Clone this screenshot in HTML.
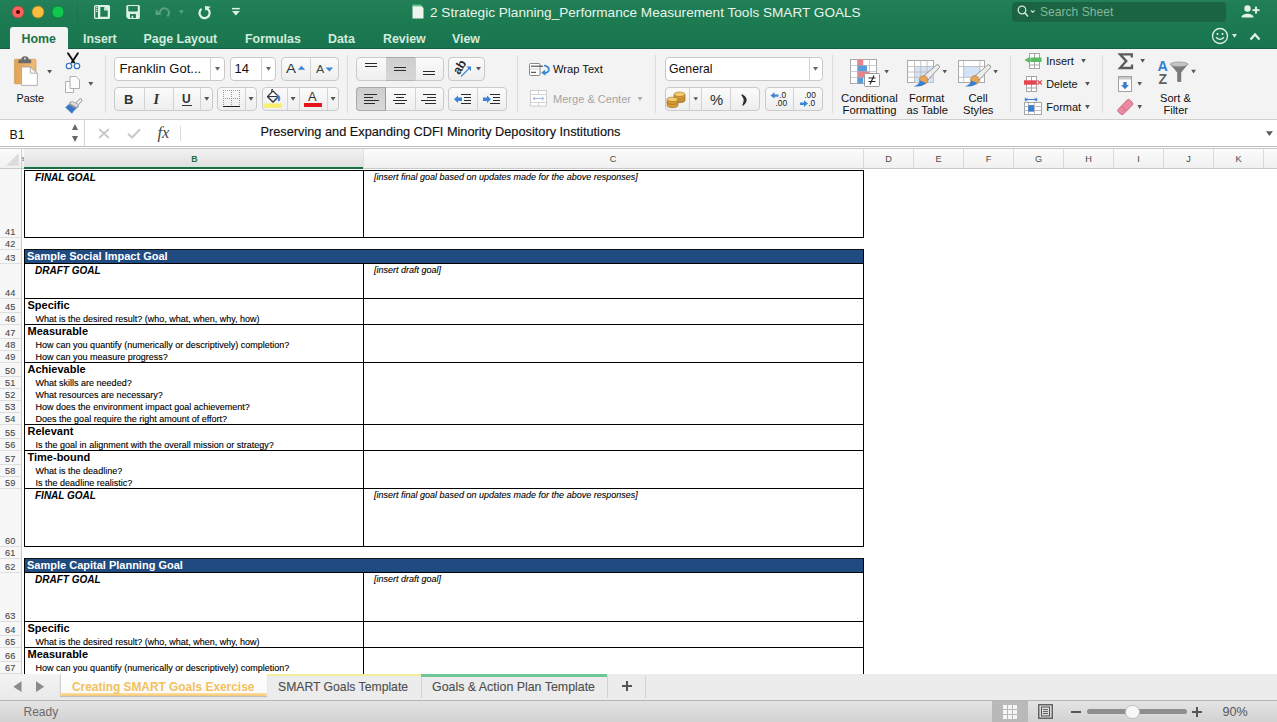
<!DOCTYPE html>
<html><head><meta charset="utf-8">
<style>
*{margin:0;padding:0;box-sizing:border-box}
html,body{width:1277px;height:722px;overflow:hidden;background:#fff;font-family:"Liberation Sans",sans-serif;position:relative}
.a,.rn,.ch,.hd,.sb,.fg,.ins,.blue,.hl,.vl,.t{position:absolute}
.t{white-space:nowrap;line-height:1}
#title{left:0;top:0;width:1277px;height:49px;background:linear-gradient(#22805a,#1e7c52 30%,#187550);border-bottom:1px solid #17603f}
#hometab{left:10px;top:27px;width:58px;height:23px;background:#f4f4f4;border-radius:3px 3px 0 0}
.rtab{top:33px;font-size:12.4px;font-weight:bold;color:#d3ebdc}
#ribbon{left:0;top:49px;width:1277px;height:71px;background:#f3f3f3;border-bottom:1px solid #cfcfcf}
.sep{top:55px;width:1px;height:58px;background:#dcdcdc}
.btn{border:1px solid #cacaca;border-radius:4px;background:linear-gradient(#fbfbfb,#eeeeee)}
.box{border:1px solid #c9c9c9;border-radius:4px;background:#fff}
.dv{width:1px;background:#d3d3d3}
.arr{width:5px;height:3.8px;background:#555;clip-path:polygon(0 0,100% 0,50% 100%)}
.rl{font-size:11px;color:#111}
#fbar{left:0;top:120px;width:1277px;height:27px;background:#fff;border-bottom:1px solid #bdbdbd}
#fbar2{left:0;top:148px;width:1277px;height:1px;background:#c8c8c8}
#colhdr{left:0;top:149px;width:1277px;height:20px;background:linear-gradient(#fbfbfb,#f0f0f0);border-bottom:1px solid #c9c9c9}
#rowhdr{left:0;top:169px;width:22px;height:505px;background:#f7f7f7;border-right:1px solid #c9c9c9}
.rn{left:-0.3px;width:21px;font-size:9.2px;color:#474747;-webkit-text-stroke:0.1px #474747;display:flex;align-items:flex-end;justify-content:center;border-bottom:1px solid #dedede;line-height:9px;padding-bottom:0px}
.rn span{display:inline-block}
.ch{top:149px;height:19px;font-size:9.2px;color:#4a4a4a;text-align:center;line-height:20px;border-left:1px solid #dadada}
.hd{left:27.5px;font-size:11px;font-weight:bold;color:#000;line-height:14px;white-space:nowrap}
.sb{left:35.6px;font-size:9px;color:#000;-webkit-text-stroke:0.12px #000;line-height:12px;white-space:nowrap}
.fg{left:35px;font-size:10px;font-weight:bold;font-style:italic;color:#000;line-height:15px;white-space:nowrap}
.ins{left:374px;font-size:9px;font-style:italic;color:#000;-webkit-text-stroke:0.1px #000;line-height:15px;white-space:nowrap}
.blue{left:24px;width:840px;background:#1f4b80;border-top:1px solid #111;border-bottom:1px solid #111}
.blue span{position:absolute;left:3px;top:0;font-size:11px;font-weight:bold;color:#fff;line-height:13px;white-space:nowrap}
.hl{left:24px;width:840px;height:1px;background:#000}
.vl{width:1px;background:#000}
#tabbar{left:0;top:674px;width:1277px;height:27px;background:#ececec;border-bottom:1px solid #b5b5b5}
#status{left:0;top:701px;width:1277px;height:21px;background:linear-gradient(#e4e4e4,#d2d2d2)}
</style></head><body>
<div id="title" class="a"></div>
<!-- traffic lights -->
<svg class="a" style="left:0;top:0" width="72" height="24" viewBox="0 0 72 24">
 <circle cx="18" cy="12" r="6" fill="#fc615d" stroke="#b53c3a" stroke-opacity="0.7" stroke-width="0.9"/>
 <circle cx="18" cy="11.9" r="2" fill="#4f0002"/>
 <circle cx="38" cy="12" r="6" fill="#fdbc40" stroke="#a77a1c" stroke-opacity="0.7" stroke-width="0.9"/>
 <circle cx="58" cy="12" r="6" fill="#10c84f" stroke="#0b7a30" stroke-opacity="0.8" stroke-width="0.9"/>
</svg>
<div class="a" style="left:77px;top:3px;width:1px;height:20px;background:rgba(0,0,0,0.07)"></div>
<!-- quick access icons -->
<svg class="a" style="left:88px;top:0px" width="160" height="24" viewBox="88 0 160 24">
 <path fill-rule="evenodd" fill="#dcf2e4" d="M95.5 4.9 H108.5 Q110 4.9 110 6.4 V17.5 Q110 19 108.5 19 H95.5 Q94 19 94 17.5 V6.4 Q94 4.9 95.5 4.9z M95.3 6.3 V17.8 H97.9 V6.3z M100.3 7 V16.7 H107.7 V10.5 L104.2 7z"/>
 <circle cx="96.6" cy="7.6" r="0.75" fill="#dcf2e4"/><circle cx="96.6" cy="9.5" r="0.75" fill="#dcf2e4"/><circle cx="96.6" cy="11.4" r="0.75" fill="#dcf2e4"/>
 <path d="M104.2 7 V10.5 H107.7z" fill="#dcf2e4"/>
 <path fill-rule="evenodd" fill="#dcf2e4" d="M127.8 4.9 H138.4 Q139.9 4.9 139.9 6.4 V17.5 Q139.9 19 138.4 19 H128.3 L126.3 17 V6.4 Q126.3 4.9 127.8 4.9z M128.2 6.1 V10.5 Q128.2 11.5 129.2 11.5 H136.8 Q137.8 11.5 137.8 10.5 V6.1z M130 13.9 V17.9 H135.9 V13.9z"/>
 <rect x="131.5" y="15.8" width="1.7" height="2.1" fill="#dcf2e4"/>
 <path d="M159.8 13.2 A4.6 4.6 0 1 1 167.4 16.4" fill="none" stroke="#5ba17f" stroke-width="2"/>
 <path d="M155.6 9 V15 H161.6z" fill="#5ba17f"/>
 <path d="M178.9 10.2 h4.9 l-2.45 3.7z" fill="#5ba17f"/>
 <path d="M206.2 8.2 A5.1 5.1 0 1 1 201.6 8.9" fill="none" stroke="#dcf2e4" stroke-width="2.3"/>
 <path d="M204.9 6 L210.9 6.8 L205.3 10.8z" fill="#dcf2e4"/>
 <rect x="232" y="7.9" width="7.8" height="1.5" fill="#dcf2e4"/>
 <path d="M232 10.9 h7.8 l-3.9 4.5z" fill="#dcf2e4"/>
</svg>
<!-- doc icon + title -->
<svg class="a" style="left:412px;top:4px" width="12" height="15" viewBox="0 0 12 15">
 <path d="M0.5 1.5h8.5l2.5 2.5v10.5h-11z" fill="#eef5ef"/>
 <rect x="0.5" y="0.5" width="9" height="1.8" fill="#5bc07c"/>
</svg>
<div class="t" style="left:430px;top:6.4px;font-size:13.6px;color:#e8f4ec">2 Strategic Planning_Performance Measurement Tools SMART GOALS</div>
<!-- search -->
<div class="a" style="left:1012px;top:2px;width:214px;height:20px;background:#1b6442;border-radius:4px"></div>
<svg class="a" style="left:1017px;top:5px" width="20" height="13" viewBox="0 0 20 13">
 <circle cx="5" cy="5" r="3.8" fill="none" stroke="#d8ebdf" stroke-width="1.3"/>
 <line x1="7.8" y1="7.8" x2="11" y2="11.5" stroke="#d8ebdf" stroke-width="1.5"/>
 <path d="M14 5.5l1.8 1.8 1.8-1.8" fill="none" stroke="#d8ebdf" stroke-width="1.1"/>
</svg>
<div class="t" style="left:1040px;top:6px;font-size:12.1px;color:#86b79a">Search Sheet</div>
<svg class="a" style="left:1241px;top:5px" width="19" height="13" viewBox="0 0 19 13">
 <circle cx="6.5" cy="3.5" r="3.2" fill="#e3f1e8"/>
 <path d="M0.5 12.5 C0.5 7.5 12.5 7.5 12.5 12.5z" fill="#e3f1e8"/>
 <rect x="11.5" y="4.2" width="7" height="1.9" fill="#e3f1e8"/>
 <rect x="14.05" y="1.6" width="1.9" height="7" fill="#e3f1e8"/>
</svg>
<svg class="a" style="left:1211px;top:27px" width="18" height="18" viewBox="0 0 18 18">
 <circle cx="9" cy="9" r="7.5" fill="none" stroke="#e3f1e8" stroke-width="1.3"/>
 <circle cx="6.5" cy="7" r="1" fill="#e3f1e8"/><circle cx="11.5" cy="7" r="1" fill="#e3f1e8"/>
 <path d="M5 10.2 Q9 14.5 13 10.2" fill="none" stroke="#e3f1e8" stroke-width="1.3"/>
</svg>
<div class="a arr" style="left:1232px;top:34px;background:#d8ebdf"></div>
<svg class="a" style="left:1249px;top:32px" width="12" height="9" viewBox="0 0 12 9">
 <path d="M1.5 7.5 L6 2.5 L10.5 7.5" fill="none" stroke="#e3f1e8" stroke-width="2.2"/>
</svg>
<!-- ribbon tabs -->
<div id="hometab" class="a"></div>
<div class="t rtab" style="left:21.5px;color:#217346">Home</div>
<div class="t rtab" style="left:83px">Insert</div>
<div class="t rtab" style="left:143.5px">Page Layout</div>
<div class="t rtab" style="left:245px">Formulas</div>
<div class="t rtab" style="left:328px">Data</div>
<div class="t rtab" style="left:383px">Review</div>
<div class="t rtab" style="left:452px">View</div>

<div id="ribbon" class="a"></div>
<!-- Paste -->
<svg class="a" style="left:10px;top:52px" width="46" height="38" viewBox="10 52 46 38">
 <defs><linearGradient id="gb" x1="0" x2="1" y1="0" y2="0"><stop offset="0" stop-color="#e0a257"/><stop offset="1" stop-color="#efbd78"/></linearGradient></defs>
 <rect x="14.4" y="59.2" width="21.6" height="24.6" rx="1.2" fill="url(#gb)" stroke="#c98f45" stroke-width="0.6"/>
 <path d="M21.3 59.6 Q21.3 56.2 25 56.2 Q28.7 56.2 28.7 59.6 H30 Q31.3 59.6 31.3 61.3 V62 Q31.3 63.3 30 63.3 H19.5 Q18.2 63.3 18.2 62 V61.3 Q18.2 59.6 19.5 59.6z" fill="#6b6b6b"/>
 <rect x="24" y="57.8" width="2" height="1.6" fill="#d9d9d9"/>
 <path d="M21.6 67 H30.3 L37.3 73.2 V85.4 H21.6z" fill="#fff" stroke="#9f9f9f" stroke-width="0.8"/>
 <path d="M30.3 67 V73.2 H37.3z" fill="#fdf6ea" stroke="#9f9f9f" stroke-width="0.8" stroke-linejoin="round"/>
 <path d="M47.1 69.9 h5 l-2.5 3.7z" fill="#555"/>
</svg>
<div class="t" style="left:16.5px;top:93px;font-size:10.8px;color:#111">Paste</div>
<!-- cut copy format painter -->
<svg class="a" style="left:62px;top:51px" width="20" height="19" viewBox="62 51 20 19">
 <path d="M68 53.2 L74.2 62.5 M77.9 53.2 L71.8 62.5" stroke="#111" stroke-width="1.9" stroke-linecap="round"/>
 <circle cx="69" cy="66" r="2.7" fill="#fff" stroke="#3a78c4" stroke-width="1.3"/>
 <circle cx="77" cy="66" r="2.7" fill="#fff" stroke="#3a78c4" stroke-width="1.3"/>
</svg>
<svg class="a" style="left:65px;top:76px" width="16" height="17" viewBox="0 0 16 17">
 <path d="M0.5 5.5 h6 l2 2 v9 h-8z" fill="#fbfbfb" stroke="#a8a8a8" stroke-width="0.9"/>
 <path d="M5 0.5 h6 l3.5 3.5 v8.5 h-9.5z" fill="#fbfbfb" stroke="#a8a8a8" stroke-width="0.9"/>
</svg>
<div class="a arr" style="left:88.3px;top:82px"></div>
<svg class="a" style="left:62px;top:97px" width="22" height="19" viewBox="62 97 22 19">
 <path d="M80.5 100.2 L77.3 103.6" stroke="#8a8a8a" stroke-width="3.6" stroke-linecap="round"/>
 <path d="M80.5 100.2 L77.3 103.6" stroke="#f4f4f4" stroke-width="2.2" stroke-linecap="round"/>
 <path d="M70.5 101.5 L78.8 106.2 L76 109 Q73.5 110.5 72 113.8 L65.2 107.2 Q68.6 105.5 70.5 101.5z" fill="#3a77c3"/>
 <path d="M72.3 101.3 L78.8 104.8 L76.6 107.6 L69.2 103.5z" fill="#dcdcdc" stroke="#8f8f8f" stroke-width="0.7"/>
 <path d="M69 104.2 L76.2 108.3" stroke="#c9a27a" stroke-width="0.8"/>
</svg>
<div class="a sep" style="left:105px"></div>

<!-- font group -->
<div class="a box" style="left:114px;top:57px;width:111px;height:24px"></div>
<div class="a dv" style="left:210px;top:58px;height:22px"></div>
<div class="t" style="left:119.5px;top:62.3px;font-size:13px;color:#111">Franklin Got...</div>
<div class="a arr" style="left:215px;top:67px;background:#666"></div>
<div class="a box" style="left:229.5px;top:57px;width:46px;height:24px"></div>
<div class="a dv" style="left:261px;top:58px;height:22px"></div>
<div class="t" style="left:234.5px;top:62.3px;font-size:13px;color:#111">14</div>
<div class="a arr" style="left:266px;top:67px;background:#666"></div>
<div class="a btn" style="left:280.5px;top:57px;width:58px;height:24px"></div>
<div class="a dv" style="left:309.5px;top:58px;height:22px"></div>
<div class="t" style="left:285.5px;top:62.2px;font-size:13.6px;color:#333;transform:scaleX(1.1);transform-origin:left">A</div>
<svg class="a" style="left:297px;top:65px" width="9" height="6" viewBox="0 0 9 6"><path d="M0.8 4.8 L4.5 0.8 L8.2 4.8z" fill="#3c86d4"/></svg>
<div class="t" style="left:316px;top:63.8px;font-size:11.2px;color:#444;transform:scaleX(1.1);transform-origin:left">A</div>
<svg class="a" style="left:325px;top:66.5px" width="9" height="6" viewBox="0 0 9 6"><path d="M0.6 0.6 L8.2 0.6 L4.4 4.6z" fill="#3c86d4"/></svg>

<div class="a btn" style="left:114px;top:87px;width:99px;height:24px"></div>
<div class="a dv" style="left:143.5px;top:88px;height:22px"></div>
<div class="a dv" style="left:172.5px;top:88px;height:22px"></div>
<div class="a dv" style="left:200px;top:88px;height:22px"></div>
<div class="t" style="left:124px;top:93px;font-size:13px;font-weight:bold;color:#333">B</div>
<div class="t" style="left:153.5px;top:92px;font-size:14.5px;font-style:italic;font-family:'Liberation Serif',serif;font-weight:bold;color:#333">I</div>
<div class="t" style="left:182px;top:93px;font-size:12px;font-weight:bold;color:#333">U</div><div class="a" style="left:181.5px;top:104.8px;width:10px;height:1.2px;background:#333"></div>
<div class="a arr" style="left:204.3px;top:97px"></div>
<div class="a btn" style="left:217px;top:87px;width:40px;height:24px"></div>
<div class="a dv" style="left:245px;top:88px;height:22px"></div>
<svg class="a" style="left:222px;top:89px" width="20" height="19" viewBox="222 89 20 19" shape-rendering="crispEdges">
 <g fill="#9d9d9d">
 <rect x="223" y="90" width="1" height="1"/><rect x="223" y="98" width="1" height="1"/><rect x="225" y="90" width="1" height="1"/><rect x="225" y="98" width="1" height="1"/><rect x="227" y="90" width="1" height="1"/><rect x="227" y="98" width="1" height="1"/><rect x="229" y="90" width="1" height="1"/><rect x="229" y="98" width="1" height="1"/><rect x="231" y="90" width="1" height="1"/><rect x="231" y="98" width="1" height="1"/><rect x="233" y="90" width="1" height="1"/><rect x="233" y="98" width="1" height="1"/><rect x="235" y="90" width="1" height="1"/><rect x="235" y="98" width="1" height="1"/><rect x="237" y="90" width="1" height="1"/><rect x="237" y="98" width="1" height="1"/><rect x="239" y="90" width="1" height="1"/><rect x="239" y="98" width="1" height="1"/><rect x="223" y="90" width="1" height="1"/><rect x="231" y="90" width="1" height="1"/><rect x="239" y="90" width="1" height="1"/><rect x="223" y="92" width="1" height="1"/><rect x="231" y="92" width="1" height="1"/><rect x="239" y="92" width="1" height="1"/><rect x="223" y="94" width="1" height="1"/><rect x="231" y="94" width="1" height="1"/><rect x="239" y="94" width="1" height="1"/><rect x="223" y="96" width="1" height="1"/><rect x="231" y="96" width="1" height="1"/><rect x="239" y="96" width="1" height="1"/><rect x="223" y="98" width="1" height="1"/><rect x="231" y="98" width="1" height="1"/><rect x="239" y="98" width="1" height="1"/><rect x="223" y="100" width="1" height="1"/><rect x="231" y="100" width="1" height="1"/><rect x="239" y="100" width="1" height="1"/><rect x="223" y="102" width="1" height="1"/><rect x="231" y="102" width="1" height="1"/><rect x="239" y="102" width="1" height="1"/><rect x="223" y="104" width="1" height="1"/><rect x="231" y="104" width="1" height="1"/><rect x="239" y="104" width="1" height="1"/>
 </g>
 <rect x="223" y="106" width="17" height="1" fill="#222"/>
</svg>
<div class="a arr" style="left:248.5px;top:97px"></div>
<div class="a btn" style="left:261.5px;top:87px;width:77px;height:24px"></div>
<div class="a dv" style="left:286.5px;top:88px;height:22px"></div>
<div class="a dv" style="left:298.5px;top:88px;height:22px"></div>
<div class="a dv" style="left:326.5px;top:88px;height:22px"></div>
<svg class="a" style="left:262px;top:88px" width="22" height="21" viewBox="262 88 22 21">
 <path d="M267.5 96.5 L273 91 L278.5 96.5 L273 102z" fill="#fff" stroke="#333" stroke-width="1.1" stroke-linejoin="round"/>
 <path d="M267.5 96.5 L278.5 96.5 L273 102z" fill="#e8eef5" stroke="#333" stroke-width="1.1" stroke-linejoin="round"/>
 <path d="M272 92 Q270.5 89 273 89.3" fill="none" stroke="#333" stroke-width="1"/>
 <path d="M277 95 Q280.5 96 279.5 100 Q278.8 101.5 278 100" fill="#3c86d4" stroke="#3c86d4" stroke-width="1.2"/>
 <rect x="264.2" y="103.5" width="17.5" height="4.3" fill="#f6f06a"/>
</svg>
<div class="a arr" style="left:290.5px;top:97px"></div>
<div class="t" style="left:308px;top:90.5px;font-size:12.8px;color:#333">A</div>
<div class="a" style="left:304px;top:103px;width:18px;height:4.4px;background:#e8141c"></div>
<div class="a arr" style="left:330.5px;top:97px"></div>
<div class="a sep" style="left:347px"></div>

<!-- alignment group -->
<div class="a btn" style="left:356px;top:57px;width:88px;height:24px"></div>
<div class="a" style="left:386px;top:57px;width:29px;height:24px;background:linear-gradient(#cfcfcf,#d6d6d6);border-top:1px solid #aaa;border-bottom:1px solid #b5b5b5"></div>
<div class="a dv" style="left:414.5px;top:58px;height:22px"></div>
<div class="a btn" style="left:356px;top:87px;width:88px;height:24px"></div>
<div class="a" style="left:356px;top:87px;width:30px;height:24px;background:linear-gradient(#cdcdcd,#d8d8d8);border:1px solid #aaa;border-right:1px solid #999;border-radius:4px 0 0 4px"></div>
<div class="a dv" style="left:414.5px;top:88px;height:22px"></div>
<svg class="a" style="left:354px;top:55px" width="92" height="58" viewBox="0 0 92 58" shape-rendering="crispEdges" fill="#2b2b2b">
 <rect x="11" y="8" width="12" height="1"/><rect x="11" y="11" width="12" height="1"/>
 <rect x="40" y="12" width="12" height="1"/><rect x="40" y="15" width="12" height="1"/>
 <rect x="69" y="16" width="12" height="1"/><rect x="69" y="19" width="12" height="1"/>
 <rect x="10" y="39" width="13" height="1"/><rect x="10" y="42" width="9" height="1"/><rect x="10" y="45" width="15" height="1"/><rect x="10" y="48" width="11" height="1"/>
 <rect x="40" y="39" width="12" height="1"/><rect x="42" y="42" width="8" height="1"/><rect x="39" y="45" width="14" height="1"/><rect x="41" y="48" width="10" height="1"/>
 <rect x="69" y="39" width="13" height="1"/><rect x="73" y="42" width="9" height="1"/><rect x="67" y="45" width="15" height="1"/><rect x="71" y="48" width="11" height="1"/>
</svg>
<div class="a btn" style="left:448px;top:57px;width:37px;height:24px"></div>
<svg class="a" style="left:446px;top:55px" width="64" height="58" viewBox="0 0 64 58">
 <text x="0" y="0" font-size="12.3" font-weight="bold" font-family="Liberation Sans" fill="#2b2b2b" transform="translate(13.2 20.2) rotate(-58)">ab</text>
 <path d="M15 21.5 L24.5 12" stroke="#3c86d4" stroke-width="1.1"/>
 <path d="M20.5 11.5 L25 11.5 L25 16z" fill="#3c86d4"/>
 <path d="M30 12 h5 l-2.5 3.5z" fill="#555"/>
</svg>
<div class="a btn" style="left:448px;top:87px;width:59px;height:24px"></div>
<div class="a dv" style="left:477px;top:88px;height:22px"></div>
<svg class="a" style="left:446px;top:55px" width="64" height="58" viewBox="0 0 64 58">
 <g shape-rendering="crispEdges" fill="#2b2b2b">
 <rect x="15" y="39" width="10" height="1"/><rect x="18" y="42" width="7" height="1"/><rect x="18" y="45" width="7" height="1"/><rect x="15" y="48" width="10" height="1"/>
 <rect x="44" y="39" width="10" height="1"/><rect x="47" y="42" width="7" height="1"/><rect x="47" y="45" width="7" height="1"/><rect x="44" y="48" width="10" height="1"/>
 </g>
 <path d="M8 44.2 L12 40.5 V42.5 H16 V46 H12 V48z" fill="#3c86d4"/>
 <path d="M45 44.2 L41 40.5 V42.5 H37 V46 H41 V48z" fill="#3c86d4"/>
</svg>
<div class="a sep" style="left:516.5px"></div>
<!-- wrap / merge -->
<svg class="a" style="left:524px;top:56px" width="30" height="24" viewBox="524 56 30 24">
 <rect x="529.5" y="63.5" width="10.5" height="12" rx="1" fill="#fff" stroke="#8a8a8a" stroke-width="1"/>
 <path d="M530 69h9.5" stroke="#c8c8c8" stroke-width="0.9"/>
 <path d="M531 66.2h12" stroke="#333" stroke-width="1"/>
 <path d="M531 72.3h5" stroke="#333" stroke-width="1"/>
 <path d="M544.2 65.3 Q549.5 66.5 548.8 70.5 Q548 73 544 73" fill="none" stroke="#3c86d4" stroke-width="1.8"/>
 <path d="M541.2 72.8 L545 69.8 L545.5 75.8z" fill="#3c86d4"/>
</svg>
<div class="t" style="left:553px;top:63.5px;font-size:11.15px;color:#111">Wrap Text</div>
<svg class="a" style="left:528px;top:88px" width="21" height="20" viewBox="528 88 21 20">
 <rect x="530.5" y="90.5" width="16" height="15.5" fill="#fff" stroke="#cdcdcd" stroke-width="1"/>
 <path d="M530.5 94.5h16M530.5 102.5h16M538.5 90.5v4M538.5 102.5v3.5" stroke="#d5d5d5" stroke-width="1"/>
 <path d="M533 98.5h11" stroke="#a9bfd6" stroke-width="1.1"/>
 <path d="M535 96.5 L532.6 98.5 L535 100.5z M542 96.5 L544.4 98.5 L542 100.5z" fill="#a9bfd6"/>
</svg>
<div class="t" style="left:553px;top:93.5px;font-size:11.05px;color:#a6a6a6">Merge &amp; Center</div>
<div class="a arr" style="left:637.5px;top:97px;background:#aaa"></div>
<div class="a sep" style="left:655px"></div>

<!-- number group -->
<div class="a box" style="left:664.5px;top:57px;width:158px;height:24px"></div>
<div class="a dv" style="left:808.5px;top:58px;height:22px"></div>
<div class="t" style="left:669px;top:63px;font-size:12.25px;color:#111">General</div>
<div class="a arr" style="left:813px;top:67px;background:#666"></div>
<div class="a btn" style="left:664.5px;top:87px;width:95px;height:24px"></div>
<div class="a dv" style="left:689px;top:88px;height:22px"></div>
<div class="a dv" style="left:701px;top:88px;height:22px"></div>
<div class="a dv" style="left:730px;top:88px;height:22px"></div>
<div class="a btn" style="left:764.5px;top:87px;width:58px;height:24px"></div>
<div class="a dv" style="left:793px;top:88px;height:22px"></div>
<svg class="a" style="left:662px;top:85px" width="164" height="28" viewBox="0 0 164 28">
 <!-- back stack -->
 <path d="M12 9.5 v6 a5.5 2.2 0 0 0 11 0 v-6z" fill="#d69a38" stroke="#9c6a1a" stroke-width="0.6"/>
 <path d="M12 12 a5.5 2.2 0 0 0 11 0 M12 14.5 a5.5 2.2 0 0 0 11 0" fill="none" stroke="#9c6a1a" stroke-width="0.6"/>
 <ellipse cx="17.5" cy="9.3" rx="5.5" ry="2.2" fill="#f5cd6e" stroke="#9c6a1a" stroke-width="0.6"/>
 <!-- front stack -->
 <path d="M5 14.5 v6 a5.5 2.2 0 0 0 11 0 v-6z" fill="#d69a38" stroke="#9c6a1a" stroke-width="0.6"/>
 <path d="M5 17.2 a5.5 2.2 0 0 0 11 0" fill="none" stroke="#9c6a1a" stroke-width="0.6"/>
 <ellipse cx="10.5" cy="14.4" rx="5.5" ry="2.2" fill="#f5cd6e" stroke="#9c6a1a" stroke-width="0.6"/>
 <path d="M31.5 12.2 h4.5 l-2.25 3.3z" fill="#555"/>
 <text x="48" y="19.5" font-size="14.8" font-family="Liberation Sans" fill="#2b2b2b">%</text>
 <path d="M80 10 Q87.5 14 81 20 Q84 14.5 80 10z" fill="#2b2b2b" stroke="#2b2b2b" stroke-width="1.2" stroke-linejoin="round"/>
 <path d="M9 8.3 L13 5 V7.2 H17 V9.6 H13 V11.6z" transform="translate(99.5 2.2)" fill="#3c86d4"/>
 <text x="117.3" y="13.2" font-size="8.4" font-family="Liberation Sans" fill="#222">.0</text>
 <text x="113.4" y="21.3" font-size="8.4" font-family="Liberation Sans" fill="#222">.00</text>
 <text x="142.3" y="13.2" font-size="8.4" font-family="Liberation Sans" fill="#222">.00</text>
 <path d="M146 18.6 L142 15.3 V17.5 H138 V19.9 H142 V21.9z" fill="#3c86d4"/>
 <text x="146.2" y="21.3" font-size="8.4" font-family="Liberation Sans" fill="#222">.0</text>
</svg>
<div class="a sep" style="left:831.5px"></div>

<!-- styles group -->
<svg class="a" style="left:846px;top:55px" width="154" height="35" viewBox="846 55 154 35">
 <rect x="850.5" y="59.5" width="26" height="24" fill="#fff" stroke="#a9a9a9" stroke-width="1"/>
 <path d="M850.5 65.5h26M850.5 71.5h26M850.5 77.5h26M857.5 59.5v24M863 59.5v24M869.5 59.5v24" stroke="#c2c2c2" stroke-width="0.8" fill="none"/>
 <rect x="857.5" y="59.5" width="5.5" height="6" fill="#e8838b"/>
 <rect x="857.5" y="65.5" width="9.5" height="6" fill="#5b9bd8"/>
 <rect x="857.5" y="71.5" width="12" height="6" fill="#e8838b"/>
 <rect x="857.5" y="77.5" width="5.5" height="6" fill="#5b9bd8"/>
 <rect x="864.5" y="73.5" width="15" height="13" rx="1" fill="#fff" stroke="#9a9a9a" stroke-width="1"/>
 <path d="M868.5 78h7M868.5 81.5h7M870 84.5l4-9" stroke="#222" stroke-width="1.1" fill="none"/>
 <path d="M884.4 70h4.5l-2.25 3.5z" fill="#555"/>
 <rect x="907.5" y="60.5" width="26" height="22" fill="#fff" stroke="#a9a9a9" stroke-width="1"/>
 <rect x="914.5" y="66.5" width="19" height="16" fill="#d3e3f5"/>
 <path d="M907.5 66.5h26M907.5 72h26M907.5 77.3h26M914.5 60.5v22M920.8 60.5v22M927 60.5v22" stroke="#b8b8b8" stroke-width="0.8" fill="none"/>
 <path d="M942.5 70h4.5l-2.25 3.5z" fill="#555"/>
 <rect x="958.5" y="60.5" width="26" height="22" fill="#fff" stroke="#a9a9a9" stroke-width="1"/>
 <rect x="963.6" y="66.5" width="16.3" height="10.8" fill="#d3e3f5"/>
 <path d="M958.5 66.5h26M958.5 77.3h26M963.6 60.5v22M979.9 60.5v22" stroke="#b8b8b8" stroke-width="0.8" fill="none"/>
 <path d="M993.4 70h4.5l-2.25 3.5z" fill="#555"/>
 <g transform="translate(0 0)">
  <path d="M937 64.6 Q939.8 64.8 939.5 67.4 L927.8 80 L923.5 76.2z" fill="#ededed" stroke="#8c8c8c" stroke-width="0.9" stroke-linejoin="round"/>
  <circle cx="923.6" cy="80" r="4.3" fill="#e3a65c" stroke="#b27a33" stroke-width="0.7"/>
  <path d="M920.2 80.5 Q918.6 85.2 913.6 86.2 Q921.5 87.8 926 83z" fill="#3a7fd0"/>
 </g>
 <g transform="translate(51.2 0)">
  <path d="M937 64.6 Q939.8 64.8 939.5 67.4 L927.8 80 L923.5 76.2z" fill="#ededed" stroke="#8c8c8c" stroke-width="0.9" stroke-linejoin="round"/>
  <circle cx="923.6" cy="80" r="4.3" fill="#e3a65c" stroke="#b27a33" stroke-width="0.7"/>
  <path d="M920.2 80.5 Q918.6 85.2 913.6 86.2 Q921.5 87.8 926 83z" fill="#3a7fd0"/>
 </g>
</svg>
<div class="t" style="left:841px;top:92.5px;font-size:11.35px;color:#111">Conditional</div>
<div class="t" style="left:842.5px;top:104.5px;font-size:11.3px;color:#111">Formatting</div>
<div class="t" style="left:909px;top:92.5px;font-size:11.2px;color:#111">Format</div>
<div class="t" style="left:906.5px;top:104.5px;font-size:11.2px;color:#111">as Table</div>
<div class="t" style="left:968.5px;top:92.5px;font-size:11.2px;color:#111">Cell</div>
<div class="t" style="left:963px;top:104.5px;font-size:11.2px;color:#111">Styles</div>
<div class="a sep" style="left:1010px"></div>

<!-- cells group -->
<svg class="a" style="left:1018px;top:50px" width="80" height="68" viewBox="1018 50 80 68">
 <rect x="1029.5" y="53.5" width="10" height="15" fill="#fff" stroke="#a5a5a5" stroke-width="1"/>
 <path d="M1034.5 53.5v15M1029.5 65h10" stroke="#a5a5a5" stroke-width="1"/>
 <rect x="1030.5" y="57.5" width="11" height="4.5" fill="#5cb863"/>
 <path d="M1030.5 58.5 h-1 v-1.5 l-5 3 l5 3 v-1.5 h1z" fill="#5cb863"/>
 <path d="M1081.1 59h4.8l-2.4 3.7z" fill="#555"/>
 <rect x="1026.5" y="76.5" width="10" height="15" fill="#fff" stroke="#a5a5a5" stroke-width="1"/>
 <path d="M1031.5 76.5v15M1026.5 88h10" stroke="#a5a5a5" stroke-width="1"/>
 <rect x="1024" y="80.3" width="12.5" height="4.4" fill="#e6464f"/>
 <path d="M1037.5 80.5 L1041.8 84.5 M1041.8 80.5 L1037.5 84.5" stroke="#e6464f" stroke-width="1.3"/>
 <path d="M1085.1 82h4.7l-2.35 3.8z" fill="#555"/>
 <path d="M1025.5 99.5 h11" stroke="#3c7fcf" stroke-width="1"/>
 <path d="M1025.3 97.8 v3.4 M1036.7 97.8 v3.4" stroke="#3c7fcf" stroke-width="1"/>
 <path d="M1027.5 98 l-1.8 1.5 l1.8 1.5 M1034.5 98 l1.8 1.5 l-1.8 1.5" fill="none" stroke="#3c7fcf" stroke-width="0.9"/>
 <rect x="1024.5" y="102.5" width="17" height="12" fill="#fff" stroke="#a5a5a5" stroke-width="1"/>
 <path d="M1024.5 106.5h17M1024.5 110.5h17M1028.5 102.5v12M1034.5 102.5v12" stroke="#b5b5b5" stroke-width="0.9"/>
 <rect x="1028.2" y="105.1" width="5.8" height="6.6" fill="#3c7fcf"/>
 <path d="M1085.1 105.1h4.7l-2.35 3.8z" fill="#555"/>
</svg>
<div class="t" style="left:1046.3px;top:56.3px;font-size:11px;color:#111">Insert</div>
<div class="t" style="left:1046.3px;top:79.3px;font-size:10.8px;color:#111">Delete</div>
<div class="t" style="left:1046.3px;top:102px;font-size:11px;color:#111">Format</div>
<div class="a sep" style="left:1102px"></div>

<!-- editing group -->
<svg class="a" style="left:1112px;top:50px" width="90" height="68" viewBox="1112 50 90 68">
 <path d="M1131.8 57.5 V54.3 H1120 L1126.3 61.1 L1120 68 H1132 V64.6" fill="none" stroke="#5c5c5c" stroke-width="2.3" stroke-linejoin="miter"/>
 <path d="M1140.3 59h4.7l-2.35 3.7z" fill="#555"/>
 <rect x="1118.5" y="76.5" width="13" height="15" fill="#fff" stroke="#a0a0a0" stroke-width="1"/>
 <rect x="1119" y="77" width="12" height="2.5" fill="#c9c9c9"/>
 <path d="M1125 89.2 L1121 85 H1123.3 V82 H1126.7 V85 H1129z" fill="#3c7fcf"/>
 <path d="M1137.4 82h4.6l-2.3 3.8z" fill="#555"/>
 <path d="M1118 109.5 L1127 100 Q1128.5 98.7 1130 100 L1132.5 102.5 Q1133.5 104 1132.3 105.3 L1123.5 114 Q1122 115.2 1120.5 114 L1118 111.6 Q1117 110.5 1118 109.5z" fill="#e98aa0" stroke="#c0566f" stroke-width="0.7"/>
 <path d="M1121.5 106 L1126 110.7" stroke="#c0566f" stroke-width="0.7"/>
 <path d="M1137.4 105.1h4.6l-2.3 3.8z" fill="#555"/>
 <text x="1157.6" y="70.7" font-size="14.3" font-weight="bold" font-family="Liberation Sans" fill="#3a7fd0">A</text>
 <text x="1158.5" y="83.7" font-size="14" font-weight="bold" font-family="Liberation Sans" fill="#606060">Z</text>
 <path d="M1170 64 Q1179 61 1188.2 64 L1181.2 72.5 V81.5 Q1179.2 82.5 1177.2 81.5 V72.5z" fill="#7a7a7a"/>
 <ellipse cx="1179.1" cy="64.3" rx="8.8" ry="2.4" fill="#c4c4c4" stroke="#8a8a8a" stroke-width="0.6"/>
 <path d="M1191.2 69.8h4.7l-2.35 3.8z" fill="#555"/>
</svg>
<div class="t" style="left:1160px;top:92.5px;font-size:11.1px;color:#111">Sort &amp;</div>
<div class="t" style="left:1163.5px;top:104.5px;font-size:11px;color:#111">Filter</div>

<!-- formula bar -->
<div id="fbar" class="a"></div>
<div id="fbar2" class="a"></div>
<div class="t" style="left:9.5px;top:129px;font-size:12.3px;color:#111">B1</div>
<div class="a" style="left:72px;top:124px;width:0;height:0;border-left:3.6px solid transparent;border-right:3.6px solid transparent;border-bottom:6px solid #666"></div>
<div class="a" style="left:72px;top:135.7px;width:0;height:0;border-left:3.6px solid transparent;border-right:3.6px solid transparent;border-top:6px solid #666"></div>
<div class="a" style="left:84px;top:119px;width:1px;height:28px;background:#d3d3d3"></div>
<svg class="a" style="left:98px;top:128px" width="12" height="11" viewBox="0 0 12 11">
 <path d="M1.2 1 L10.8 10 M10.8 1 L1.2 10" stroke="#c9c9c9" stroke-width="1.9"/>
</svg>
<svg class="a" style="left:127px;top:128px" width="14" height="11" viewBox="0 0 14 11">
 <path d="M1 5.8 L5 9.5 L13 1.2" fill="none" stroke="#c9c9c9" stroke-width="2"/>
</svg>
<div class="t" style="left:157.5px;top:125px;font-size:16.5px;font-style:italic;font-family:'Liberation Serif',serif;color:#444">fx</div>
<div class="a" style="left:179.5px;top:126px;width:1px;height:15px;background:#dcdcdc"></div>
<div class="t" style="left:260.5px;top:126px;font-size:12.75px;color:#111;-webkit-text-stroke:0.15px #111">Preserving and Expanding CDFI Minority Depository Institutions</div>
<svg class="a" style="left:1265px;top:130px" width="9" height="8" viewBox="0 0 9 8"><path d="M1 1.2 H7.9 L4.45 6z" fill="#5a5a5a"/></svg>

<!-- column header -->
<div id="colhdr" class="a"></div>
<div class="a" style="left:24px;top:149px;width:339px;height:19px;background:linear-gradient(#f2f2f2,#dedede)"></div>
<div class="a" style="left:24px;top:166.5px;width:339px;height:2px;background:#1d6b42"></div>
<div class="t" style="left:191.2px;top:154.6px;font-size:8.8px;font-weight:bold;color:#1e7145">B</div>
<div class="t" style="left:609.8px;top:154.6px;font-size:9.2px;color:#4a4a4a">C</div>
<div class="a" style="left:21px;top:149px;width:1px;height:19px;background:#d0d0d0"></div>
<div class="a" style="left:363px;top:149px;width:1px;height:19px;background:#e0e0e0"></div>
<svg class="a" style="left:0px;top:149px" width="22" height="19" viewBox="0 149 22 19"><path d="M6.1 165.8 L18.8 153 V165.8z" fill="#dcdcdc"/></svg>
<div class="a" style="left:24px;top:166px;width:339px;height:1px;background:#cdeedb"></div>
<div class="a" style="left:22px;top:150px;width:2px;height:17px;overflow:hidden"><div class="t" style="left:-2px;top:6px;font-size:8px;color:#777">A</div></div>
<div id="rowhdr" class="a"></div>

<div id="sheet"><div class="rn" style="top:168px;height:70px"><span>41</span></div>
<div class="rn" style="top:237px;height:13px"><span>42</span></div>
<div class="rn" style="top:249px;height:15px"><span>43</span></div>
<div class="rn" style="top:263px;height:36px"><span>44</span></div>
<div class="rn" style="top:298px;height:15px"><span>45</span></div>
<div class="rn" style="top:312px;height:13px"><span>46</span></div>
<div class="rn" style="top:324px;height:15px"><span>47</span></div>
<div class="rn" style="top:338px;height:13px"><span>48</span></div>
<div class="rn" style="top:350px;height:13px"><span>49</span></div>
<div class="rn" style="top:362px;height:15px"><span>50</span></div>
<div class="rn" style="top:376px;height:13px"><span>51</span></div>
<div class="rn" style="top:388px;height:13px"><span>52</span></div>
<div class="rn" style="top:400px;height:13px"><span>53</span></div>
<div class="rn" style="top:412px;height:13px"><span>54</span></div>
<div class="rn" style="top:424px;height:15px"><span>55</span></div>
<div class="rn" style="top:438px;height:13px"><span>56</span></div>
<div class="rn" style="top:450px;height:15px"><span>57</span></div>
<div class="rn" style="top:464px;height:13px"><span>58</span></div>
<div class="rn" style="top:476px;height:13px"><span>59</span></div>
<div class="rn" style="top:488px;height:59px"><span>60</span></div>
<div class="rn" style="top:546px;height:13px"><span>61</span></div>
<div class="rn" style="top:558px;height:15px"><span>62</span></div>
<div class="rn" style="top:572px;height:50px"><span>63</span></div>
<div class="rn" style="top:621px;height:15px"><span>64</span></div>
<div class="rn" style="top:635px;height:13px"><span>65</span></div>
<div class="rn" style="top:647px;height:15px"><span>66</span></div>
<div class="rn" style="top:661px;height:13px"><span>67</span></div>
<div class="ch" style="left:863px;width:50px">D</div>
<div class="ch" style="left:913px;width:50px">E</div>
<div class="ch" style="left:963px;width:50px">F</div>
<div class="ch" style="left:1013px;width:50px">G</div>
<div class="ch" style="left:1063px;width:50px">H</div>
<div class="ch" style="left:1113px;width:50px">I</div>
<div class="ch" style="left:1163px;width:50px">J</div>
<div class="ch" style="left:1213px;width:50px">K</div>
<div class="ch" style="left:1263px;width:50px">L</div>
<div class="hd" style="top:298px">Specific</div>
<div class="hd" style="top:324px">Measurable</div>
<div class="hd" style="top:362px">Achievable</div>
<div class="hd" style="top:424px">Relevant</div>
<div class="hd" style="top:450px">Time-bound</div>
<div class="hd" style="top:621px">Specific</div>
<div class="hd" style="top:647px">Measurable</div>
<div class="sb" style="top:312.5px">What is the desired result? (who, what, when, why, how)</div>
<div class="sb" style="top:338.5px">How can you quantify (numerically or descriptively) completion?</div>
<div class="sb" style="top:350.5px">How can you measure progress?</div>
<div class="sb" style="top:376.5px">What skills are needed?</div>
<div class="sb" style="top:388.5px">What resources are necessary?</div>
<div class="sb" style="top:400.5px">How does the environment impact goal achievement?</div>
<div class="sb" style="top:412.5px">Does the goal require the right amount of effort?</div>
<div class="sb" style="top:438.5px">Is the goal in alignment with the overall mission or strategy?</div>
<div class="sb" style="top:464.5px">What is the deadline?</div>
<div class="sb" style="top:476.5px">Is the deadline realistic?</div>
<div class="sb" style="top:635.5px">What is the desired result? (who, what, when, why, how)</div>
<div class="sb" style="top:661.5px">How can you quantify (numerically or descriptively) completion?</div>
<div class="fg" style="top:170px">FINAL GOAL</div>
<div class="ins" style="top:170px">[insert final goal based on updates made for the above responses]</div>
<div class="fg" style="top:488px">FINAL GOAL</div>
<div class="ins" style="top:488px">[insert final goal based on updates made for the above responses]</div>
<div class="fg" style="top:263px">DRAFT GOAL</div>
<div class="ins" style="top:263px">[insert draft goal]</div>
<div class="fg" style="top:572px">DRAFT GOAL</div>
<div class="ins" style="top:572px">[insert draft goal]</div>
<div class="blue" style="top:249px;height:15px"><span>Sample Social Impact Goal</span></div>
<div class="blue" style="top:558px;height:15px"><span>Sample Capital Planning Goal</span></div>
<div class="hl" style="top:170px"></div>
<div class="hl" style="top:237px"></div>
<div class="hl" style="top:263px"></div>
<div class="hl" style="top:298px"></div>
<div class="hl" style="top:324px"></div>
<div class="hl" style="top:362px"></div>
<div class="hl" style="top:424px"></div>
<div class="hl" style="top:450px"></div>
<div class="hl" style="top:488px"></div>
<div class="hl" style="top:546px"></div>
<div class="hl" style="top:572px"></div>
<div class="hl" style="top:621px"></div>
<div class="hl" style="top:647px"></div>
<div class="vl" style="left:24px;top:170px;height:68px"></div>
<div class="vl" style="left:363px;top:170px;height:68px"></div>
<div class="vl" style="left:863px;top:170px;height:68px"></div>
<div class="vl" style="left:24px;top:249px;height:298px"></div>
<div class="vl" style="left:363px;top:263px;height:284px"></div>
<div class="vl" style="left:863px;top:249px;height:298px"></div>
<div class="vl" style="left:24px;top:558px;height:116px"></div>
<div class="vl" style="left:363px;top:572px;height:102px"></div>
<div class="vl" style="left:863px;top:558px;height:116px"></div></div>
<div id="tabbar" class="a"></div>
<div class="a" style="left:0;top:674px;width:60px;height:26px;background:linear-gradient(#f3f3f3,#e9e9e9)"></div>
<svg class="a" style="left:12px;top:680px" width="34" height="14" viewBox="12 680 34 14"><path d="M21.5 681.3 V692 L13.3 686.65z M36 681.3 V692 L44.2 686.65z" fill="#8b8b8b"/></svg>
<!-- active tab -->
<div class="a" style="left:59.5px;top:674px;width:207.5px;height:22px;background:linear-gradient(#fefefe,#fafafa);border-left:1px solid #d0d0d0;box-shadow:0 1px 1px rgba(0,0,0,0.18)"></div>
<div class="a" style="left:60px;top:693px;width:207px;height:3.3px;background:linear-gradient(#fbe2a8,#f3c46f);border-radius:0 0 2px 2px"></div>
<div class="t" style="left:72px;top:681.5px;font-size:11.9px;font-weight:bold;color:#f2c160">Creating SMART Goals Exercise</div>
<!-- tab 2 -->
<div class="a" style="left:267px;top:674px;width:154px;height:2px;background:#f1ef9a"></div>
<div class="a" style="left:421px;top:676px;width:1px;height:22px;background:#d2d2d2"></div>
<div class="t" style="left:278px;top:681px;font-size:12.2px;color:#4f4f4f;-webkit-text-stroke:0.12px #4f4f4f">SMART Goals Template</div>
<!-- tab 3 -->
<div class="a" style="left:421px;top:674px;width:186px;height:2.5px;background:#70c696"></div>
<div class="a" style="left:607px;top:676px;width:1px;height:22px;background:#d2d2d2"></div>
<div class="t" style="left:432px;top:681px;font-size:12.4px;color:#4f4f4f;-webkit-text-stroke:0.12px #4f4f4f">Goals &amp; Action Plan Template</div>
<!-- plus -->
<div class="a" style="left:622px;top:685px;width:10px;height:2px;background:#555"></div>
<div class="a" style="left:626px;top:681px;width:2px;height:10px;background:#555"></div>
<div class="a" style="left:645px;top:676px;width:1px;height:22px;background:#d2d2d2"></div>
<!-- status -->
<div id="status" class="a"></div>
<div class="t" style="left:23.5px;top:706px;font-size:12px;color:#6a6a6a">Ready</div>
<div class="a" style="left:992px;top:701px;width:36px;height:21px;background:#b9b9b9"></div>
<svg class="a" style="left:1003px;top:705px" width="14" height="14" viewBox="0 0 14 14">
 <path d="M0 0h14v14h-14z" fill="#f5f5f5"/>
 <path d="M4.5 0v14M9.5 0v14M0 4.5h14M0 9.5h14" stroke="#b9b9b9" stroke-width="1"/>
</svg>
<svg class="a" style="left:1038px;top:704px" width="15" height="15" viewBox="0 0 15 15">
 <rect x="0.75" y="0.75" width="13.5" height="13.5" fill="none" stroke="#555" stroke-width="1.3"/>
 <rect x="3.5" y="3" width="8" height="9" fill="none" stroke="#555" stroke-width="1"/>
 <path d="M5 5.5h5M5 7.5h5M5 9.5h5" stroke="#555" stroke-width="0.9"/>
</svg>
<div class="a" style="left:1071px;top:711px;width:10px;height:2px;background:#555"></div>
<div class="a" style="left:1087px;top:709px;width:100px;height:5px;border-radius:3px;background:#8e8e8e"></div>
<div class="a" style="left:1125px;top:704.5px;width:14.5px;height:14.5px;border-radius:50%;background:#f7f7f7;border:1px solid #bdbdbd"></div>
<div class="a" style="left:1192px;top:711px;width:10px;height:2px;background:#555"></div>
<div class="a" style="left:1196px;top:707px;width:2px;height:10px;background:#555"></div>
<div class="t" style="left:1222.5px;top:706px;font-size:12.6px;color:#555">90%</div>
</body></html>
